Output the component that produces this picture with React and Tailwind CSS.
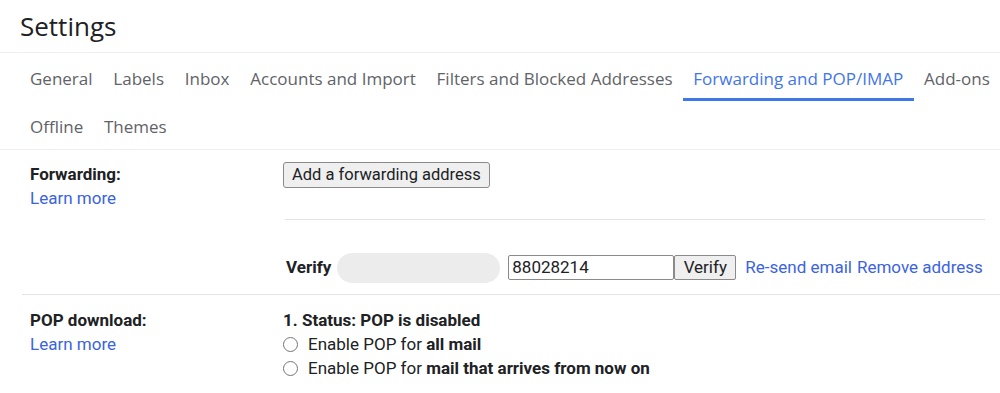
import React from 'react';

const tabsRow1 = ['General', 'Labels', 'Inbox', 'Accounts and Import', 'Filters and Blocked Addresses', 'Forwarding and POP/IMAP', 'Add-ons'];
const tabsRow2 = ['Offline', 'Themes'];

function Tab({ label, active }) {
    return (
        <div
            className={
                'h-12 px-[10.4px] flex items-center shrink-0 whitespace-nowrap border-b-[3px] ' +
                (active ? 'border-[#3f76e8] text-[#3f76e8]' : 'border-transparent text-[#5f6368]')
            }
        >
            <span className="pt-[6px]">{label}</span>
        </div>
    );
}

function Radio({ children }) {
    return (
        <label className="flex items-center h-6">
            <span className="w-[15px] h-[15px] rounded-full border border-[#767676] bg-white mr-[10px]" />
            <span>{children}</span>
        </label>
    );
}

export default function App() {
    return (
        <div className="w-[1000px] h-[393px] bg-white overflow-hidden font-['Roboto',sans-serif] text-[#202124]">
            {/* Header */}
            <div className="h-[53px] pl-[20px] flex items-center border-b border-[#eceff1]">
                <h1 className="text-[26px] font-['Open_Sans',sans-serif] text-[#202124]">Settings</h1>
            </div>

            {/* Tabs */}
            <div className="pl-[19.6px] border-b border-[#eceff1] text-[17px] font-['Open_Sans',sans-serif] overflow-hidden">
                <div className="flex">
                    {tabsRow1.map((t) => (
                        <Tab key={t} label={t} active={t === 'Forwarding and POP/IMAP'} />
                    ))}
                </div>
                <div className="flex">
                    {tabsRow2.map((t) => (
                        <Tab key={t} label={t} />
                    ))}
                </div>
            </div>

            {/* Forwarding */}
            <div className="flex text-[17px] border-b border-[#e3e3e3] ml-[22px]">
                <div className="w-[261px] pl-[8px] pt-[12px] leading-6">
                    <div className="font-bold">Forwarding:</div>
                    <a className="text-[#3b63e0]">Learn more</a>
                </div>
                <div className="flex-1 pt-[12px] pb-[11px]">
                    <button className="h-[26px] px-[8px] text-[16.5px] bg-[#efefef] border border-[#8a8a8a] rounded-[3px] text-[#202124] leading-none">
                        Add a forwarding address
                    </button>
                    <div className="mt-[31px] mr-[15px] ml-[2px] border-t border-[#e3e3e3]" />
                    <div className="mt-[32px] flex items-center h-[31px] pl-[3px]">
                        <span className="font-bold">Verify</span>
                        <span className="ml-[6px] w-[163px] h-[30px] rounded-full bg-[#ececec]" />
                        <input
                            readOnly
                            value="88028214"
                            className="ml-[8px] w-[166px] h-[25px] px-[3px] text-[17px] border border-[#8a8a8a] rounded-[2px] outline-none"
                        />
                        <button className="h-[25px] w-[62px] text-[17px] bg-[#efefef] border border-[#8a8a8a] rounded-[2px] leading-none">
                            Verify
                        </button>
                        <a className="ml-[9px] text-[#3b63e0]">Re-send email</a>
                        <a className="ml-[5px] text-[#3b63e0]">Remove address</a>
                    </div>
                </div>
            </div>

            {/* POP download */}
            <div className="flex text-[17px] leading-6">
                <div className="w-[283px] pl-[30px] pt-[13px]">
                    <div className="font-bold">POP download:</div>
                    <a className="text-[#3b63e0]">Learn more</a>
                </div>
                <div className="pt-[13px]">
                    <div className="font-bold">1. Status: POP is disabled</div>
                    <Radio>
                        Enable POP for <b>all mail</b>
                    </Radio>
                    <Radio>
                        Enable POP for <b>mail that arrives from now on</b>
                    </Radio>
                </div>
            </div>
        </div>
    );
}
